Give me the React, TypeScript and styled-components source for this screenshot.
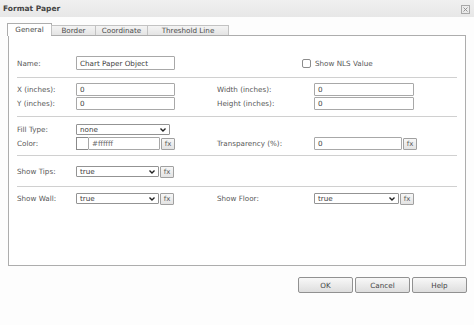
import React from 'react';
import styled, { createGlobalStyle } from 'styled-components';

const Global = createGlobalStyle`
  html, body { margin: 0; padding: 0; background: #fdfdfd; }
  body { font-family: "DejaVu Sans", Verdana, sans-serif; }
`;

const Dialog = styled.div`
  width: 474px;
  height: 325px;
  box-sizing: border-box;
  background: #fdfdfd;
  display: flex;
  flex-direction: column;
  font-size: 7.2px;
  color: #555;
  overflow: hidden;
`;

const TitleBar = styled.div`
  height: 17px;
  flex: none;
  display: flex;
  align-items: center;
  justify-content: space-between;
  padding: 0 4px 0 3px;
  background: linear-gradient(#f0f0f0, #e7e7e7);
`;

const Title = styled.span`
  font-weight: bold;
  font-size: 7.5px;
  color: #444;
`;

const CloseBox = styled.span`
  width: 7px;
  height: 7px;
  border: 1px solid #a8a8a8;
  display: flex;
  align-items: center;
  justify-content: center;
  margin-top: 1px;
`;

const Body = styled.div`
  padding: 6px 8px 0 8px;
  display: flex;
  flex-direction: column;
`;

const TabBar = styled.div`
  display: flex;
  align-items: flex-start;
  height: 12px;
  margin-left: -1px;
  position: relative;
  z-index: 1;
`;

const Tab = styled.div<{ $w: number; $active?: boolean }>`
  width: ${p => p.$w}px;
  height: ${p => (p.$active ? 13 : 10)}px;
  margin-top: ${p => (p.$active ? 0 : 2)}px;
  box-sizing: border-box;
  border: 1px solid ${p => (p.$active ? '#adadad' : '#c2c2c2')};
  border-bottom: none;
  background: ${p => (p.$active ? '#ffffff' : 'linear-gradient(#f4f4f4, #e4e4e4)')};
  display: flex;
  align-items: center;
  justify-content: center;
  padding-bottom: ${p => (p.$active ? 1 : 0)}px;
  color: #4a4a4a;
  & + & { margin-left: -1px; }
`;

const Panel = styled.div`
  height: 231px;
  box-sizing: border-box;
  border: 1px solid #adadad;
  background: #ffffff;
  padding: 0 8px;
  display: flex;
  flex-direction: column;
`;

const Section = styled.div<{ $pt: number; $pb: number }>`
  padding: ${p => p.$pt}px 0 ${p => p.$pb}px 0;
  display: flex;
  flex-direction: column;
  gap: 1px;
`;

const Rule = styled.div`
  height: 1px;
  background: #d0d0d0;
`;

const Row = styled.div<{ $cols?: string; $h?: number }>`
  display: grid;
  grid-template-columns: ${p => p.$cols ?? '59px 141px 97px 1fr'};
  height: ${p => p.$h ?? 13}px;
  align-items: center;
`;

const Label = styled.span`
  color: #575757;
  white-space: nowrap;
`;

const Field = styled.div`
  display: flex;
  align-items: center;
  height: 100%;
`;

const TextBox = styled.div<{ $w: number; $h?: number; $muted?: boolean }>`
  width: ${p => p.$w}px;
  height: ${p => p.$h ?? 13}px;
  box-sizing: border-box;
  border: 1px solid #a8a8a8;
  border-radius: 1px;
  background: #fff;
  padding: 0 3px;
  display: flex;
  align-items: center;
  color: ${p => (p.$muted ? '#6a6a6a' : '#404040')};
  white-space: nowrap;
`;

const SelectBox = styled.div<{ $w: number }>`
  width: ${p => p.$w}px;
  height: 11px;
  box-sizing: border-box;
  border: 1px solid #939393;
  border-radius: 1px;
  background: #fff;
  padding: 0 3px 0 3px;
  display: flex;
  align-items: center;
  justify-content: space-between;
  color: #404040;
`;

const FxButton = styled.div`
  width: 14px;
  height: 12px;
  box-sizing: border-box;
  border: 1px solid #a0a0a0;
  border-radius: 1px;
  background: linear-gradient(#f7f7f7, #e3e3e3);
  display: flex;
  align-items: center;
  justify-content: center;
  color: #5a5a5a;
  margin-left: 1px;
  font-size: 7px;
`;

const Swatch = styled.div`
  width: 12px;
  height: 13px;
  box-sizing: border-box;
  border: 1px solid #8a8a8a;
  border-right: none;
  background: #fff;
`;

const CheckGroup = styled.label`
  display: flex;
  align-items: center;
  gap: 4px;
  color: #575757;
`;

const CheckBox = styled.span`
  width: 9px;
  height: 9px;
  box-sizing: border-box;
  border: 1px solid #8c8c8c;
  border-radius: 2px;
  background: #fff;
`;

const Footer = styled.div`
  display: flex;
  justify-content: flex-end;
  gap: 2px;
  padding-top: 11px;
  margin-right: -1px;
`;

const Button = styled.div`
  width: 55px;
  height: 16px;
  box-sizing: border-box;
  border: 1px solid #919191;
  border-radius: 2px;
  background: linear-gradient(#f8f8f8, #dedede);
  display: flex;
  align-items: center;
  justify-content: center;
  color: #444;
`;

const Chevron = () => (
  <svg width="6" height="4" viewBox="0 0 6 4">
    <path d="M0.5 0.5 L3 3 L5.5 0.5" fill="none" stroke="#222" strokeWidth="1.4" />
  </svg>
);

const CloseIcon = () => (
  <svg width="5" height="5" viewBox="0 0 5 5">
    <path d="M0.5 0.5 L4.5 4.5 M4.5 0.5 L0.5 4.5" stroke="#8a8a8a" strokeWidth="0.9" />
  </svg>
);

const Select = ({ w, value }: { w: number; value: string }) => (
  <SelectBox $w={w}>
    <span>{value}</span>
    <Chevron />
  </SelectBox>
);

export default function App() {
  return (
    <>
      <Global />
      <Dialog>
        <TitleBar>
          <Title>Format Paper</Title>
          <CloseBox><CloseIcon /></CloseBox>
        </TitleBar>
        <Body>
          <TabBar>
            <Tab $w={45} $active>General</Tab>
            <Tab $w={45}>Border</Tab>
            <Tab $w={53}>Coordinate</Tab>
            <Tab $w={82}>Threshold Line</Tab>
          </TabBar>
          <Panel>
            <Section $pt={20} $pb={7}>
              <Row $cols="59px 226px 1fr" $h={14}>
                <Label>Name:</Label>
                <Field><TextBox $w={99} $h={14}>Chart Paper Object</TextBox></Field>
                <CheckGroup><CheckBox />Show NLS Value</CheckGroup>
              </Row>
            </Section>
            <Rule />
            <Section $pt={5} $pb={6}>
              <Row>
                <Label>X (inches):</Label>
                <Field><TextBox $w={99}>0</TextBox></Field>
                <Label>Width (inches):</Label>
                <Field><TextBox $w={100}>0</TextBox></Field>
              </Row>
              <Row>
                <Label>Y (inches):</Label>
                <Field><TextBox $w={99}>0</TextBox></Field>
                <Label>Height (inches):</Label>
                <Field><TextBox $w={100}>0</TextBox></Field>
              </Row>
            </Section>
            <Rule />
            <Section $pt={6} $pb={5}>
              <Row>
                <Label>Fill Type:</Label>
                <Field><Select w={94} value="none" /></Field>
              </Row>
              <Row>
                <Label>Color:</Label>
                <Field>
                  <Swatch />
                  <TextBox $w={72} $muted>#ffffff</TextBox>
                  <FxButton>fx</FxButton>
                </Field>
                <Label>Transparency (%):</Label>
                <Field>
                  <TextBox $w={88}>0</TextBox>
                  <FxButton>fx</FxButton>
                </Field>
              </Row>
            </Section>
            <Rule />
            <Section $pt={9} $pb={8}>
              <Row>
                <Label>Show Tips:</Label>
                <Field>
                  <Select w={83} value="true" />
                  <FxButton>fx</FxButton>
                </Field>
              </Row>
            </Section>
            <Rule />
            <Section $pt={5} $pb={0}>
              <Row>
                <Label>Show Wall:</Label>
                <Field>
                  <Select w={83} value="true" />
                  <FxButton>fx</FxButton>
                </Field>
                <Label>Show Floor:</Label>
                <Field>
                  <Select w={85} value="true" />
                  <FxButton>fx</FxButton>
                </Field>
              </Row>
            </Section>
          </Panel>
          <Footer>
            <Button>OK</Button>
            <Button>Cancel</Button>
            <Button>Help</Button>
          </Footer>
        </Body>
      </Dialog>
    </>
  );
}
